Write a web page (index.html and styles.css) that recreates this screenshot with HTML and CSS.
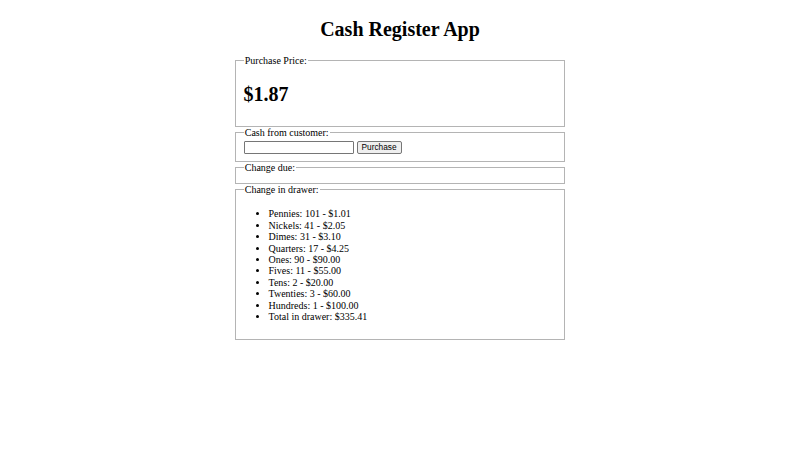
FILE: index.html
```html
<!DOCTYPE html>
<html lang="en">
<head>
<meta charset="utf-8">
<title>Cash Register App</title>
<link rel="stylesheet" href="styles.css">
</head>
<body>
<h1 class="title">Cash Register App</h1>
<main class="register">
  <fieldset class="box">
    <legend class="box-label">Purchase Price:</legend>
    <div class="price">$1.87</div>
  </fieldset>
  <fieldset class="box">
    <legend class="box-label">Cash from customer:</legend>
    <div class="cash-row">
      <input class="cash-input" type="number" id="cash">
      <button class="buy-btn" type="button">Purchase</button>
    </div>
  </fieldset>
  <fieldset class="box">
    <legend class="box-label">Change due:</legend>
  </fieldset>
  <fieldset class="box">
    <legend class="box-label">Change in drawer:</legend>
    <ul class="drawer">
      <li>Pennies: 101 - $1.01</li>
      <li>Nickels: 41 - $2.05</li>
      <li>Dimes: 31 - $3.10</li>
      <li>Quarters: 17 - $4.25</li>
      <li>Ones: 90 - $90.00</li>
      <li>Fives: 11 - $55.00</li>
      <li>Tens: 2 - $20.00</li>
      <li>Twenties: 3 - $60.00</li>
      <li>Hundreds: 1 - $100.00</li>
      <li>Total in drawer: $335.41</li>
    </ul>
  </fieldset>
</main>
</body>
</html>
```
FILE: styles.css
```css
html, body {
  background: #fff;
}
body {
  margin: 5px;
  font-family: "Liberation Serif", "Times New Roman", serif;
  font-size: 10px;
  line-height: 11.25px;
  color: #000;
}
.title {
  text-align: center;
  font-size: 20px;
  line-height: 23px;
  font-weight: bold;
  margin: 13.4px 0;
}
.register {
  width: 330px;
  margin: 0 auto;
}
.box {
  margin: 0;
  padding: 3.5px 7.5px 6.25px;
  border: 1px solid #b4b4b4;
  min-width: 0;
}
.box-label {
  padding: 0 1.25px;
  line-height: 11.25px;
}
.price {
  font-size: 20px;
  line-height: 23px;
  font-weight: bold;
  margin: 13.4px 0;
}
.cash-row {
  display: flex;
  align-items: center;
  gap: 3px;
  height: 13px;
}
.cash-input {
  box-sizing: border-box;
  width: 110px;
  height: 13px;
  margin: 0;
  padding: 0 2px;
  border: 1px solid #767676;
  border-radius: 1px;
  font: 8.3px "Liberation Sans", Arial, sans-serif;
  background: #fff;
}
.buy-btn {
  box-sizing: border-box;
  height: 13px;
  margin: 0;
  padding: 0 4px;
  border: 1px solid #767676;
  border-radius: 2px;
  background: #efefef;
  font: 8.3px "Liberation Sans", Arial, sans-serif;
  line-height: 11px;
  color: #000;
}
.drawer {
  margin: 10px 0;
  padding-left: 25px;
}
.drawer li {
  line-height: 11.4px;
}
```
